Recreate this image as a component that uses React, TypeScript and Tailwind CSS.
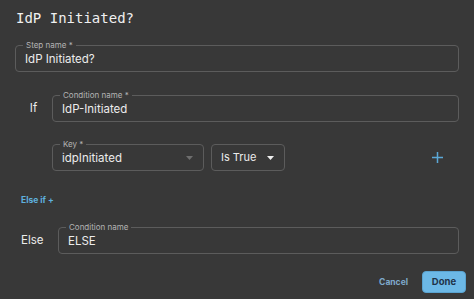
type FieldProps = {
    label: string
    value: string
    className?: string
    children?: React.ReactNode
}

function Field({ label, value, className = '', children }: FieldProps) {
    return (
        <div className={`relative h-[27px] rounded-[4px] border border-[#5c5c5c] flex items-center ${className}`}>
            <span className="absolute -top-[6px] left-[7px] px-[3px] bg-[#383838] text-[8px] leading-[10px] text-[#b4b4b4]">
                {label}
            </span>
            <span className="flex-1 pl-[9px] text-[11.5px] leading-none text-[#ececec] mt-[2px]">{value}</span>
            {children}
        </div>
    )
}

export default function App() {
    return (
        <div className="w-[474px] h-[299px] bg-[#383838] px-[15px] pt-[8px] font-['Inter',sans-serif] overflow-hidden">
            {/* Title */}
            <h1 className="font-['DejaVu_Sans_Mono',monospace] text-[14px] leading-[18px] text-[#f0f0f0] pl-[1px] mt-[1px]">
                IdP Initiated?
            </h1>

            {/* Step name */}
            <div className="flex items-center mt-[18px]">
                <Field label="Step name *" value="IdP Initiated?" className="flex-1" />
            </div>

            {/* If */}
            <div className="flex items-center mt-[23px]">
                <div className="w-[37px] text-center text-[11.5px] text-[#ececec]">If</div>
                <Field label="Condition name *" value="IdP-Initiated" className="flex-1" />
            </div>

            <div className="flex items-center mt-[22px] pl-[37px]">
                <Field label="Key *" value="idpInitiated" className="w-[152px]">
                    <svg width="7" height="4" viewBox="0 0 7 4" className="mr-[10px] mt-[1px]">
                        <path d="M0 0h7L3.5 4z" fill="#6e6e6e" />
                    </svg>
                </Field>
                <div className="ml-[7px] h-[27px] w-[74px] rounded-[4px] border border-[#5c5c5c] flex items-center pl-[9px] pr-[10px]">
                    <span className="flex-1 text-[11px] text-[#ececec]">Is True</span>
                    <svg width="7" height="4" viewBox="0 0 7 4">
                        <path d="M0 0h7L3.5 4z" fill="#f0f0f0" />
                    </svg>
                </div>
                <div className="flex-1 flex justify-end pr-[16px]">
                    <svg width="11" height="11" viewBox="0 0 11 11">
                        <path d="M5.5 0v11M0 5.5h11" stroke="#5ba8d6" strokeWidth="1.5" />
                    </svg>
                </div>
            </div>

            {/* Else if */}
            <div className="mt-[23px] pl-[6px] text-[8.5px] font-bold text-[#5fb0de] leading-[12px]">Else if +</div>

            {/* Else */}
            <div className="flex items-center mt-[21px]">
                <div className="w-[43px] pl-[6px] text-[11.5px] text-[#ececec]">Else</div>
                <Field label="Condition name" value="ELSE" className="flex-1" />
            </div>

            {/* Actions */}
            <div className="flex items-center justify-end gap-[14px] mt-[17px] -mr-[7px]">
                <button className="text-[8.5px] font-bold text-[#7fa9cc]">Cancel</button>
                <button className="h-[22px] w-[44px] rounded-[4px] bg-[#6cb8e6] border border-[#5aa3d0] text-[9.5px] font-bold text-[#1f3247]">
                    Done
                </button>
            </div>
        </div>
    )
}
